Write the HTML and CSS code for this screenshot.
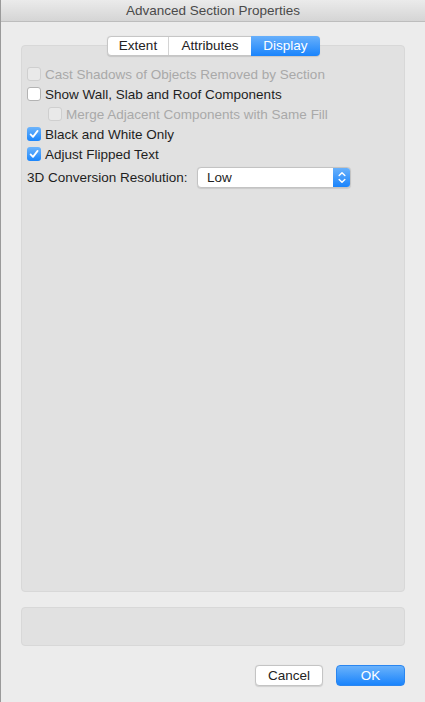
FILE: index.html
```html
<!DOCTYPE html>
<html>
<head>
<meta charset="utf-8">
<link rel="stylesheet" href="styles.css">
</head>
<body>
<div class="window">
  <div class="titlebar">Advanced Section Properties</div>
  <div class="body">
    <div class="panel">
      <div class="segmented">
        <div class="seg seg-extent">Extent</div>
        <div class="seg seg-attr">Attributes</div>
        <div class="seg seg-display active">Display</div>
      </div>
      <div class="options">
        <div class="row disabled"><span class="cb"></span><span>Cast Shadows of Objects Removed by Section</span></div>
        <div class="row"><span class="cb"></span><span>Show Wall, Slab and Roof Components</span></div>
        <div class="row disabled indent"><span class="cb"></span><span>Merge Adjacent Components with Same Fill</span></div>
        <div class="row"><span class="cb checked"><svg viewBox="0 0 14 14" width="14" height="14"><path d="M3.6 7.4 L6 9.9 L10.6 3.9" fill="none" stroke="#fff" stroke-width="1.8" stroke-linecap="round" stroke-linejoin="round"/></svg></span><span>Black and White Only</span></div>
        <div class="row"><span class="cb checked"><svg viewBox="0 0 14 14" width="14" height="14"><path d="M3.6 7.4 L6 9.9 L10.6 3.9" fill="none" stroke="#fff" stroke-width="1.8" stroke-linecap="round" stroke-linejoin="round"/></svg></span><span>Adjust Flipped Text</span></div>
        <div class="selectrow">
          <span class="label">3D Conversion Resolution:</span>
          <div class="select">
            <span class="value">Low</span>
            <span class="arrows"><svg viewBox="0 0 16 20" width="16" height="19"><path d="M5 8 L8 5 L11 8" fill="none" stroke="#fff" stroke-width="1.5" stroke-linecap="round" stroke-linejoin="round"/><path d="M5 12 L8 15 L11 12" fill="none" stroke="#fff" stroke-width="1.5" stroke-linecap="round" stroke-linejoin="round"/></svg></span>
          </div>
        </div>
      </div>
    </div>
    <div class="panel2"></div>
    <div class="buttons">
      <div class="btn cancel">Cancel</div>
      <div class="btn ok">OK</div>
    </div>
  </div>
</div>
</body>
</html>
```
FILE: styles.css
```css
html, body {
  margin: 0;
  padding: 0;
}
body {
  background: #ececec;
  font-family: "Liberation Sans", Arial, sans-serif;
  font-size: 13.5px;
  color: #1e1e1e;
}
.window {
  width: 425px;
  height: 702px;
  box-sizing: border-box;
  border-left: 1px solid #9a9a9a;
  background: #ececec;
  display: flex;
  flex-direction: column;
  overflow: hidden;
}
.titlebar {
  height: 22px;
  box-sizing: border-box;
  border-bottom: 1px solid #bdbdbd;
  background: linear-gradient(#ebebeb, #d5d5d5);
  color: #4a4a4a;
  font-size: 13.5px;
  line-height: 22px;
  text-align: center;
}
.body {
  padding: 23px 20px 0 20px;
  display: flex;
  flex-direction: column;
}
.panel {
  height: 547px;
  box-sizing: border-box;
  background: #e1e1e1;
  border: 1px solid #d8d8d8;
  border-radius: 4px;
  display: flex;
  flex-direction: column;
}
.segmented {
  align-self: center;
  margin-top: -10px;
  margin-left: 1px;
  display: flex;
  height: 20px;
  box-sizing: border-box;
  border: 1px solid #c6c6c6;
  border-radius: 4px;
  background: #fff;
  box-shadow: 0 0.5px 1px rgba(0,0,0,0.12);
}
.seg {
  line-height: 18px;
  text-align: center;
  color: #222;
}
.seg-extent { width: 60px; border-right: 1px solid #d4d4d4; }
.seg-attr { width: 82px; }
.seg-display { width: 69px; }
.seg.active {
  background: linear-gradient(#68b0fb, #1a84fc);
  color: #fff;
  margin: -1px -1px -1px 0;
  height: 20px;
  line-height: 20px;
  border-radius: 0 4px 4px 0;
}
.options {
  padding: 8px 0 0 5px;
  display: flex;
  flex-direction: column;
}
.row {
  height: 20px;
  display: flex;
  align-items: center;
  gap: 4px;
}
.row.indent { padding-left: 21px; }
.cb {
  width: 14px;
  height: 14px;
  box-sizing: border-box;
  border: 1px solid #b3b3b3;
  border-radius: 3px;
  background: #fff;
  display: inline-block;
  flex: none;
  position: relative;
}
.cb svg {
  position: absolute;
  left: -1px;
  top: -1px;
}
.cb.checked {
  border: none;
  background: linear-gradient(#6db4fb, #1b86fc);
}
.cb.checked svg {
  left: 0;
  top: 0;
}
.row.disabled { color: #a9a9a9; }
.row.disabled .cb {
  background: #e9e9e9;
  border-color: #cfcfcf;
}
.selectrow {
  margin-top: 3px;
  display: flex;
  align-items: center;
  height: 21px;
}
.label {
  width: 170px;
}
.select {
  width: 154px;
  height: 21px;
  box-sizing: border-box;
  border: 1px solid #c3c3c3;
  border-radius: 4px;
  background: #fff;
  display: flex;
  align-items: stretch;
  box-shadow: 0 0.5px 1px rgba(0,0,0,0.1);
  overflow: hidden;
}
.value {
  flex: 1;
  padding-left: 9px;
  line-height: 19px;
}
.arrows {
  width: 17px;
  background: linear-gradient(#69b1fb, #1a84fc);
  display: flex;
  align-items: center;
  justify-content: center;
}
.panel2 {
  margin-top: 15px;
  height: 39px;
  box-sizing: border-box;
  background: #e1e1e1;
  border: 1px solid #d8d8d8;
  border-radius: 4px;
}
.buttons {
  margin-top: 19px;
  display: flex;
  justify-content: flex-end;
  gap: 13px;
}
.btn {
  height: 21px;
  box-sizing: border-box;
  border-radius: 4px;
  text-align: center;
  line-height: 19px;
}
.cancel {
  width: 68px;
  background: #fff;
  border: 1px solid #c4c4c4;
  color: #222;
  box-shadow: 0 0.5px 1px rgba(0,0,0,0.12);
}
.ok {
  width: 69px;
  background: linear-gradient(#6ab2fb, #1a84fc);
  border: 1px solid #2a86f0;
  color: #fff;
}
```
